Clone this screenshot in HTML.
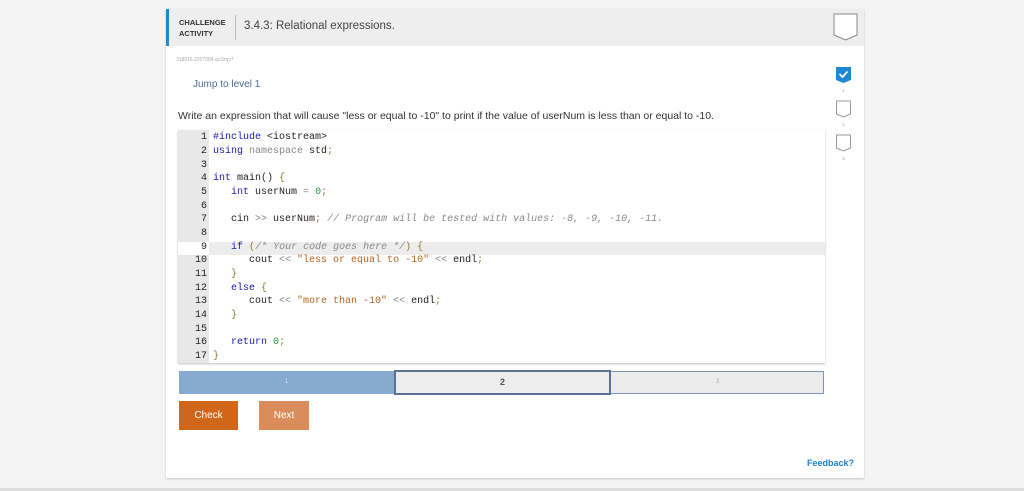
<!DOCTYPE html>
<html><head><meta charset="utf-8"><style>
body{margin:0;width:1024px;height:491px;background:#f4f4f4;font-family:"Liberation Sans",sans-serif;position:relative;overflow:hidden}
.card{position:absolute;left:166px;top:9px;width:698px;height:469px;background:#fff;box-shadow:0 1px 2px rgba(0,0,0,.2)}
.hdr{position:absolute;left:0;top:0;width:698px;height:37px;background:#eeeeee;border-left:3px solid #1e88d2;box-sizing:border-box}
.ca{position:absolute;left:10px;top:8px;font-size:7.5px;font-weight:bold;color:#333;line-height:11px}
.sep{position:absolute;left:66px;top:6px;width:1px;height:25px;background:#bbb}
.ttl{position:absolute;left:75px;top:11px;font-size:11.5px;color:#444}
.code{position:absolute;left:178px;top:130px;width:647px;height:233px;background:#fff;box-shadow:0 1px 2px rgba(0,0,0,.25)}
.gut{position:absolute;left:0;top:0;width:31px;height:233px;background:#e8e8e8}
.ln{position:absolute;left:0;width:29px;text-align:right;font:10px "Liberation Mono",monospace;color:#222}
.cl{position:absolute;left:35px;font:10px "Liberation Mono",monospace;color:#222;white-space:pre}
.k{color:#1a1ab0}.g{color:#888}.s{color:#b8651d}.n{color:#1c9a3c}.c{color:#888;font-style:italic}.b{color:#8a7a30}
</style></head><body>
<div class="card">
<div class="hdr"><div class="ca">CHALLENGE<br>ACTIVITY</div><div class="sep"></div><div class="ttl">3.4.3: Relational expressions.</div></div>
<svg style="position:absolute;left:667px;top:4px" width="26" height="30"><path d="M1 1H24V22L12.5 27L1 22Z" fill="#fff" stroke="#888"/></svg>
<div style="position:absolute;left:10px;top:48px;font-size:5px;color:#aaa">318916.2207084.qx3zqy7</div>
<div style="position:absolute;left:27px;top:70px;font-size:10px;color:#4a6d93">Jump to level 1</div>
<div style="position:absolute;left:12px;top:101px;font-size:10.5px;color:#333">Write an expression that will cause "less or equal to -10" to print if the value of userNum is less than or equal to -10.</div>
<svg style="position:absolute;left:669px;top:57px" width="18" height="110">
<path d="M1 1H16V14L8.5 17L1 14Z" fill="#1e88d2"/><path d="M4.5 8L7.5 11L12.5 5.5" stroke="#fff" stroke-width="1.7" fill="none"/>
<text x="8.5" y="26" font-size="4" fill="#888" text-anchor="middle">1</text>
<path d="M1.5 35H15.5V48L8.5 51L1.5 48Z" fill="#fff" stroke="#999"/>
<text x="8.5" y="60" font-size="4" fill="#888" text-anchor="middle">2</text>
<path d="M1.5 69H15.5V82L8.5 85L1.5 82Z" fill="#fff" stroke="#999"/>
<text x="8.5" y="94" font-size="4" fill="#888" text-anchor="middle">3</text>
</svg>
<div style="position:absolute;left:641px;top:449px;font-size:9px;font-weight:bold;color:#1e7fcb">Feedback?</div>
</div>
<div class="code"><div class="gut"></div>
<div style="position:absolute;left:0;top:112px;width:31px;height:13px;background:#fff"></div>
<div style="position:absolute;left:31px;top:112px;width:616px;height:13px;background:#ececec"></div>
<div class="ln" style="top:2px">1</div><div class="cl" style="top:2px"><span class="k">#include</span> &lt;iostream&gt;</div>
<div class="ln" style="top:16px">2</div><div class="cl" style="top:16px"><span class="k">using</span> <span class="g">namespace</span> std<span class="b">;</span></div>
<div class="ln" style="top:30px">3</div>
<div class="ln" style="top:43px">4</div><div class="cl" style="top:43px"><span class="k">int</span> main() <span class="b">{</span></div>
<div class="ln" style="top:57px">5</div><div class="cl" style="top:57px">   <span class="k">int</span> userNum <span class="g">=</span> <span class="n">0</span><span class="b">;</span></div>
<div class="ln" style="top:71px">6</div>
<div class="ln" style="top:84px">7</div><div class="cl" style="top:84px">   cin <span class="g">&gt;&gt;</span> userNum<span class="b">;</span> <span class="c">// Program will be tested with values: -8, -9, -10, -11.</span></div>
<div class="ln" style="top:98px">8</div>
<div class="ln" style="top:112px">9</div><div class="cl" style="top:112px">   <span class="k">if</span> <span class="b">(</span><span class="c">/* Your code goes here */</span><span class="b">)</span> <span class="b">{</span></div>
<div class="ln" style="top:125px">10</div><div class="cl" style="top:125px">      cout <span class="g">&lt;&lt;</span> <span class="s">"less or equal to -10"</span> <span class="g">&lt;&lt;</span> endl<span class="b">;</span></div>
<div class="ln" style="top:139px">11</div><div class="cl" style="top:139px">   <span class="b">}</span></div>
<div class="ln" style="top:153px">12</div><div class="cl" style="top:153px">   <span class="k">else</span> <span class="b">{</span></div>
<div class="ln" style="top:166px">13</div><div class="cl" style="top:166px">      cout <span class="g">&lt;&lt;</span> <span class="s">"more than -10"</span> <span class="g">&lt;&lt;</span> endl<span class="b">;</span></div>
<div class="ln" style="top:180px">14</div><div class="cl" style="top:180px">   <span class="b">}</span></div>
<div class="ln" style="top:194px">15</div>
<div class="ln" style="top:207px">16</div><div class="cl" style="top:207px">   <span class="k">return</span> <span class="n">0</span><span class="b">;</span></div>
<div class="ln" style="top:221px">17</div><div class="cl" style="top:221px"><span class="b">}</span></div>
</div>
<div style="position:absolute;left:179px;top:371px;width:645px;height:23px;border:1px solid #7b95b3;box-sizing:border-box;background:#ececec"></div>
<div style="position:absolute;left:179px;top:371px;width:215px;height:23px;background:#87abd0;color:#dde;font-size:6px;text-align:center;line-height:23px">1</div>
<div style="position:absolute;left:394px;top:370px;width:217px;height:25px;border:2px solid #5a7394;box-sizing:border-box;background:#ededed;color:#555;font-size:9px;font-weight:bold;text-align:center;line-height:21px">2</div>
<div style="position:absolute;left:611px;top:371px;width:213px;height:23px;color:#aaa;font-size:6px;text-align:center;line-height:23px">3</div>
<div style="position:absolute;left:179px;top:401px;width:59px;height:29px;background:#d0661a;color:#fff;font-size:10px;text-align:center;line-height:29px">Check</div>
<div style="position:absolute;left:259px;top:401px;width:50px;height:29px;background:#db8c5b;color:#fff;font-size:10px;text-align:center;line-height:29px">Next</div>
<div style="position:absolute;left:0;top:488px;width:1024px;height:3px;background:#ddd"></div>
</body></html>
